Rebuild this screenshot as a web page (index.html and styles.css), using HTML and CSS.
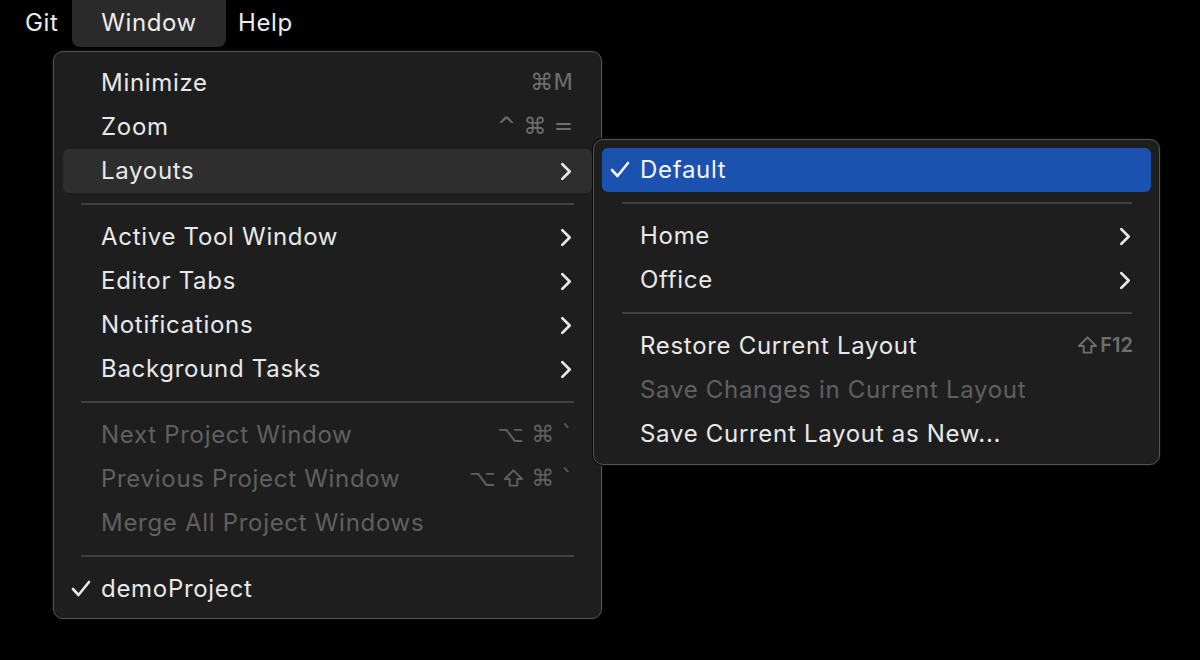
FILE: index.html
```html
<!DOCTYPE html>
<html>
<head>
<meta charset="utf-8">
<link rel="stylesheet" href="styles.css">
</head>
<body>
<div class="menubar">
  <div class="mb-item git">Git</div>
  <div class="mb-item active">Window</div>
  <div class="mb-item help">Help</div>
</div>

<div class="menu main-menu">
  <div class="row"><span class="label">Minimize</span><span class="sc">⌘M</span></div>
  <div class="row"><span class="label">Zoom</span><span class="sc">^ ⌘ =</span></div>
  <div class="row hover"><span class="label">Layouts</span><svg class="chev" viewBox="0 0 12 18"><polyline points="2,2 9,9 2,16"/></svg></div>
  <div class="sep"></div>
  <div class="row"><span class="label">Active Tool Window</span><svg class="chev" viewBox="0 0 12 18"><polyline points="2,2 9,9 2,16"/></svg></div>
  <div class="row"><span class="label">Editor Tabs</span><svg class="chev" viewBox="0 0 12 18"><polyline points="2,2 9,9 2,16"/></svg></div>
  <div class="row"><span class="label">Notifications</span><svg class="chev" viewBox="0 0 12 18"><polyline points="2,2 9,9 2,16"/></svg></div>
  <div class="row"><span class="label">Background Tasks</span><svg class="chev" viewBox="0 0 12 18"><polyline points="2,2 9,9 2,16"/></svg></div>
  <div class="sep"></div>
  <div class="row disabled"><span class="label">Next Project Window</span><span class="sc">⌥ ⌘ `</span></div>
  <div class="row disabled"><span class="label">Previous Project Window</span><span class="sc">⌥ <svg class="shift" viewBox="0 0 22 20"><path d="M11 2 L20 11 L15 11 L15 18 L7 18 L7 11 L2 11 Z"/></svg> ⌘ `</span></div>
  <div class="row disabled"><span class="label">Merge All Project Windows</span></div>
  <div class="sep"></div>
  <div class="row"><svg class="check" viewBox="0 0 20 18"><polyline points="2,9 7.5,15 18,2"/></svg><span class="label">demoProject</span></div>
</div>

<div class="menu sub-menu">
  <div class="row selected"><svg class="check" viewBox="0 0 20 18"><polyline points="2,9 7.5,15 18,2"/></svg><span class="label">Default</span></div>
  <div class="sep"></div>
  <div class="row"><span class="label">Home</span><svg class="chev" viewBox="0 0 12 18"><polyline points="2,2 9,9 2,16"/></svg></div>
  <div class="row"><span class="label">Office</span><svg class="chev" viewBox="0 0 12 18"><polyline points="2,2 9,9 2,16"/></svg></div>
  <div class="sep"></div>
  <div class="row"><span class="label">Restore Current Layout</span><span class="sc small"><svg class="shift" viewBox="0 0 22 20"><path d="M11 2 L20 11 L15 11 L15 18 L7 18 L7 11 L2 11 Z"/></svg> F12</span></div>
  <div class="row disabled"><span class="label">Save Changes in Current Layout</span></div>
  <div class="row"><span class="label">Save Current Layout as New...</span></div>
</div>
</body>
</html>
```
FILE: styles.css
```css
html, body {
  margin: 0;
  padding: 0;
  background: #000;
  width: 1200px;
  height: 660px;
  overflow: hidden;
  font-family: Inter, "Noto Sans", "DejaVu Sans", sans-serif;
  color: #e8e8e8;
}

.menubar {
  display: flex;
  height: 47px;
  align-items: stretch;
}

.mb-item {
  font-size: 24px;
  letter-spacing: 0.6px;
  display: flex;
  align-items: center;
  padding-bottom: 2px;
  box-sizing: border-box;
  color: #ececec;
}

.mb-item.git {
  width: 72px;
  padding-left: 25px;
}

.mb-item.active {
  background: #2a2a2a;
  border-radius: 0 0 8px 8px;
  width: 154px;
  justify-content: center;
}

.mb-item.help {
  padding-left: 12px;
}

.menu {
  position: absolute;
  background: #1e1e1e;
  border: 1px solid #545454;
  border-radius: 10px;
  box-shadow: 0 0 0 1px #0a0a0a;
  box-sizing: border-box;
}

.main-menu {
  left: 53px;
  top: 51px;
  width: 549px;
  height: 568px;
  padding: 9px 9px 0;
}

.sub-menu {
  left: 593px;
  top: 139px;
  width: 567px;
  height: 326px;
  padding: 8px 8px 0;
}

.row {
  position: relative;
  height: 44px;
  box-sizing: border-box;
  display: flex;
  align-items: center;
  padding: 0 19px 2px 38px;
  border-radius: 6px;
  font-size: 24px;
  letter-spacing: 0.7px;
}

.row .label {
  flex: 1;
  white-space: nowrap;
}

.row.hover {
  background: #2e2e2e;
}

.row.selected {
  background: #1b52b0;
  color: #f2f4fa;
}

.row.disabled {
  color: #606060;
}

.sc {
  display: flex;
  align-items: center;
  font-family: "DejaVu Sans", sans-serif;
  font-size: 23px;
  color: #6e6e6e;
  letter-spacing: 0;
  white-space: pre;
  margin-right: 0;
}

.sc.small {
  font-family: Inter, "DejaVu Sans", sans-serif;
  font-size: 20px;
  font-weight: 600;
  letter-spacing: 0;
  margin-right: -1px;
}

.shift {
  width: 21px;
  height: 20px;
  fill: none;
  stroke: currentColor;
  stroke-width: 2;
  stroke-linejoin: round;
}

.sc.small .shift {
  margin-right: -3px;
}

.row.disabled .sc {
  color: #606060;
}

.chev {
  width: 13px;
  height: 19px;
  margin-top: 2px;
  fill: none;
  stroke: #e8e8e8;
  stroke-width: 2.6;
  stroke-linecap: round;
  stroke-linejoin: round;
}

.check {
  position: absolute;
  left: 8px;
  top: 13px;
  width: 20px;
  height: 18px;
  fill: none;
  stroke: currentColor;
  stroke-width: 2.6;
  stroke-linecap: round;
  stroke-linejoin: round;
}

.sep {
  height: 22px;
  display: flex;
  align-items: center;
  margin: 0 18px 0 18px;
}

.sep::before {
  content: "";
  flex: 1;
  height: 2px;
  background: #414141;
}

.sub-menu .sep {
  margin: 0 19px 0 20px;
}
```
